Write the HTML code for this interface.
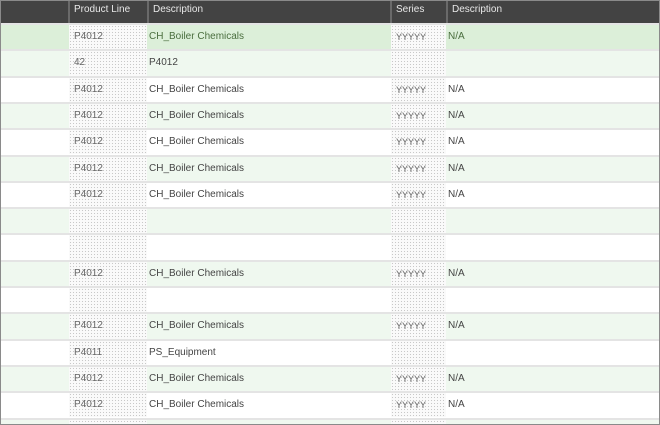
<!DOCTYPE html>
<html><head><style>
*{margin:0;padding:0;box-sizing:border-box}
body{width:660px;height:425px;overflow:hidden;background:#fff;font-family:"Liberation Sans",sans-serif;font-size:10px;position:relative}
.frame{position:absolute;left:0;top:0;width:660px;height:425px;border:1px solid #8a8a8a;overflow:hidden}
.hdr{position:absolute;left:0;top:0;width:660px;height:22px;background:#434343;color:#e8e8e8}
.hdr div{position:absolute;top:0;height:22px;line-height:17px;padding-left:4px;border-left:2px solid #6a6a6a}
.row{position:absolute;left:0;width:660px;height:24.3px;color:#444}
.c{position:absolute;top:0;height:24.3px;line-height:24px;padding-left:1px}
.d{background-color:#fafafa;background-image:radial-gradient(circle,#c8c8c8 0.6px,transparent 0.8px);background-size:3px 3px;color:#666;padding-left:5px}
.g0{background:#dcefd9}.g1{background:#eff8ef}.w{background:#fff}
.sep{position:absolute;left:0;width:660px;height:2px;background:#e4e4e4}
</style></head><body><div class="frame">
<div class="hdr">
<div style="left:67px;width:79px">Product Line</div>
<div style="left:146px;width:244px">Description</div>
<div style="left:389px;width:57px">Series</div>
<div style="left:445px;width:215px">Description</div>
</div>
<div id="rows"></div>
</div>
<script>
var data=[
["P4012","CH_Boiler Chemicals","YYYYY","N/A"],
["42","P4012","",""],
["P4012","CH_Boiler Chemicals","YYYYY","N/A"],
["P4012","CH_Boiler Chemicals","YYYYY","N/A"],
["P4012","CH_Boiler Chemicals","YYYYY","N/A"],
["P4012","CH_Boiler Chemicals","YYYYY","N/A"],
["P4012","CH_Boiler Chemicals","YYYYY","N/A"],
["","","",""],["","","",""],
["P4012","CH_Boiler Chemicals","YYYYY","N/A"],
["","","",""],
["P4012","CH_Boiler Chemicals","YYYYY","N/A"],
["P4011","PS_Equipment","",""],
["P4012","CH_Boiler Chemicals","YYYYY","N/A"],
["P4012","CH_Boiler Chemicals","YYYYY","N/A"],
["","","",""]];
var h="";
for(var i=0;i<data.length;i++){
var y=22+i*26.3;var cls=i==0?"g0":(i%2?"g1":"w");var r=data[i];
var col=i==0?"color:#4a6e3e;":"";
h+='<div class="sep" style="top:'+y+'px"></div>';
h+='<div class="row '+cls+'" style="top:'+(y+2)+'px;'+col+'">'+
'<div class="c d" style="left:68px;width:78px">'+r[0]+'</div>'+
'<div class="c" style="left:147px;width:242px">'+r[1]+'</div>'+
'<div class="c d" style="left:390px;width:55px;font-size:9px;padding-left:5px">'+r[2]+'</div>'+
'<div class="c" style="left:446px;width:214px">'+r[3]+'</div></div>';
}
document.getElementById("rows").innerHTML=h;
</script>
</body></html>
